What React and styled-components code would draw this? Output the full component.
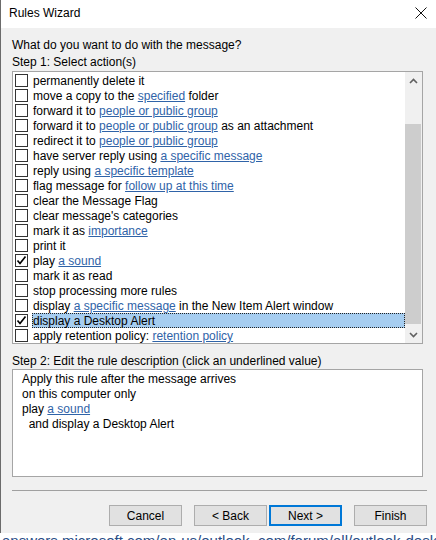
import React from "react";
import styled, { createGlobalStyle } from "styled-components";

const Global = createGlobalStyle`
  html, body { margin: 0; padding: 0; background: #ffffff; }
  body { font-family: "Segoe UI", "Liberation Sans", Arial, sans-serif; font-size: 12px; color: #000; }
  * { box-sizing: border-box; }
`;

const Page = styled.div`
  width: 436px;
  height: 540px;
  overflow: hidden;
  display: flex;
  flex-direction: column;
`;

const Dialog = styled.div`
  width: 436px;
  height: 533px;
  background: #f0f0f0;
  border-left: 1px solid #6b6b6b;
  display: flex;
  flex-direction: column;
`;

const TitleBar = styled.div`
  height: 28px;
  background: #ffffff;
  display: flex;
  align-items: center;
  justify-content: space-between;
  padding: 0 8px 0 8px;
`;

const Title = styled.span`
  font-size: 12px;
  line-height: 16px;
  margin-top: -2px;
`;

const CloseBtn = styled.div`
  width: 30px;
  height: 28px;
  display: flex;
  align-items: center;
  justify-content: center;
  margin-right: -8px;
  margin-top: -2px;
`;

const Content = styled.div`
  padding: 9px 13px 0 11px;
  display: flex;
  flex-direction: column;
`;

const Label = styled.div`
  line-height: 16px;
  height: 16px;
  white-space: nowrap;
  margin-top: ${(p) => p.$mt || 0}px;
`;

const ListBox = styled.div`
  margin-top: 1px;
  height: 273px;
  background: #ffffff;
  border: 1px solid #a5a5a5;
  display: flex;
`;

const Rows = styled.div`
  flex: 1;
  padding: 1px 0 0 2px;
  overflow: hidden;
`;

const Row = styled.div`
  height: 15px;
  display: flex;
  align-items: center;
  white-space: nowrap;
`;

const Box = styled.div`
  width: 13px;
  height: 13px;
  border: 1px solid #333333;
  background: #fff;
  flex: none;
  display: flex;
  align-items: center;
  justify-content: center;
  margin-right: 4px;
`;

const RowLabel = styled.div`
  flex: 1;
  height: 15px;
  line-height: 14px;
  padding: 1px 0 0 1px;
  background: ${(p) => (p.$selected ? "#a6cdf0" : "transparent")};
  outline: ${(p) => (p.$selected ? "1px dotted #222" : "none")};
  outline-offset: -1px;
`;

const Link = styled.span`
  color: #2f63a8;
  text-decoration: underline;
  text-underline-offset: 1px;
`;

const ScrollBar = styled.div`
  width: 17px;
  background: #f0f0f0;
  display: flex;
  flex-direction: column;
  flex: none;
`;

const ArrowBtn = styled.div`
  height: 17px;
  display: flex;
  align-items: center;
  justify-content: center;
  flex: none;
`;

const Track = styled.div`
  flex: 1;
  display: flex;
  flex-direction: column;
  padding-bottom: 2px;
`;

const Thumb = styled.div`
  background: #cdcdcd;
  flex: 1;
  margin: 0 1px 0 0;
`;

const DescBox = styled.div`
  height: 108px;
  background: #ffffff;
  border: 1px solid #a5a5a5;
  padding: 2px 0 0 9px;
`;

const DescLine = styled.div`
  height: 15px;
  line-height: 15px;
  white-space: pre;
`;

const Footer = styled.div`
  padding: 0 9px 0 11px;
  display: flex;
  flex-direction: column;
`;

const Separator = styled.div`
  margin-top: 13px;
  height: 1px;
  background: #a0a0a0;
`;

const Buttons = styled.div`
  margin-top: 14px;
  display: flex;
  justify-content: flex-end;
`;

const Button = styled.div`
  width: 73px;
  height: 21px;
  background: #e1e1e1;
  border: ${(p) => (p.$default ? "2px solid #0078d7" : "1px solid #adadad")};
  display: flex;
  align-items: center;
  justify-content: center;
  margin-left: ${(p) => p.$ml}px;
  font-size: 12px;
`;

const BottomStrip = styled.div`
  height: 7px;
  overflow: hidden;
  background: #ffffff;
  padding-left: 2px;
`;

const BgText = styled.div`
  color: #2a4d86;
  font-size: 15px;
  line-height: 18px;
  white-space: nowrap;
  margin-top: -1px;
  text-decoration: underline;
`;

const rows = [
  ["permanently delete it"],
  ["move a copy to the ", { l: "specified" }, " folder"],
  ["forward it to ", { l: "people or public group" }],
  ["forward it to ", { l: "people or public group" }, " as an attachment"],
  ["redirect it to ", { l: "people or public group" }],
  ["have server reply using ", { l: "a specific message" }],
  ["reply using ", { l: "a specific template" }],
  ["flag message for ", { l: "follow up at this time" }],
  ["clear the Message Flag"],
  ["clear message's categories"],
  ["mark it as ", { l: "importance" }],
  ["print it"],
  ["play ", { l: "a sound" }],
  ["mark it as read"],
  ["stop processing more rules"],
  ["display ", { l: "a specific message" }, " in the New Item Alert window"],
  ["display a Desktop Alert"],
  ["apply retention policy: ", { l: "retention policy" }],
];

const checked = new Set([12, 16]);
const selected = 16;

const Check = () => (
  <svg width="11" height="11" viewBox="0 0 11 11">
    <path d="M1.5 5.5 L4 8.5 L9.5 1.5" fill="none" stroke="#000" strokeWidth="1.7" />
  </svg>
);

const renderParts = (parts) =>
  parts.map((p, i) => (typeof p === "string" ? <React.Fragment key={i}>{p}</React.Fragment> : <Link key={i}>{p.l}</Link>));

export default function App() {
  return (
    <Page>
      <Global />
      <Dialog>
        <TitleBar>
          <Title>Rules Wizard</Title>
          <CloseBtn>
            <svg width="12" height="12" viewBox="0 0 12 12">
              <path d="M0.5 0.5 L11.5 11.5 M11.5 0.5 L0.5 11.5" stroke="#111" strokeWidth="1" />
            </svg>
          </CloseBtn>
        </TitleBar>
        <Content>
          <Label>What do you want to do with the message?</Label>
          <Label $mt={1}>Step 1: Select action(s)</Label>
          <ListBox>
            <Rows>
              {rows.map((parts, i) => (
                <Row key={i}>
                  <Box>{checked.has(i) && <Check />}</Box>
                  <RowLabel $selected={i === selected}>{renderParts(parts)}</RowLabel>
                </Row>
              ))}
            </Rows>
            <ScrollBar>
              <ArrowBtn>
                <svg width="9" height="6" viewBox="0 0 9 6">
                  <path d="M1 5 L4.5 1.5 L8 5" fill="none" stroke="#606060" strokeWidth="1.6" />
                </svg>
              </ArrowBtn>
              <Track style={{ paddingTop: 35 }}>
                <Thumb />
              </Track>
              <ArrowBtn>
                <svg width="9" height="6" viewBox="0 0 9 6">
                  <path d="M1 1 L4.5 4.5 L8 1" fill="none" stroke="#606060" strokeWidth="1.6" />
                </svg>
              </ArrowBtn>
            </ScrollBar>
          </ListBox>
          <Label $mt={9}>Step 2: Edit the rule description (click an underlined value)</Label>
          <DescBox>
            <DescLine>Apply this rule after the message arrives</DescLine>
            <DescLine>on this computer only</DescLine>
            <DescLine>
              play <Link>a sound</Link>
            </DescLine>
            <DescLine>{"  and display a Desktop Alert"}</DescLine>
          </DescBox>
        </Content>
        <Footer>
          <Separator />
          <Buttons>
            <Button $ml={0}>Cancel</Button>
            <Button $ml={12}>&lt; Back</Button>
            <Button $ml={2} $default>Next &gt;</Button>
            <Button $ml={12}>Finish</Button>
          </Buttons>
        </Footer>
      </Dialog>
      <BottomStrip>
        <BgText>answers.microsoft.com/en-us/outlook_com/forum/all/outlook-desktop-alerts-and-sound</BgText>
      </BottomStrip>
    </Page>
  );
}
